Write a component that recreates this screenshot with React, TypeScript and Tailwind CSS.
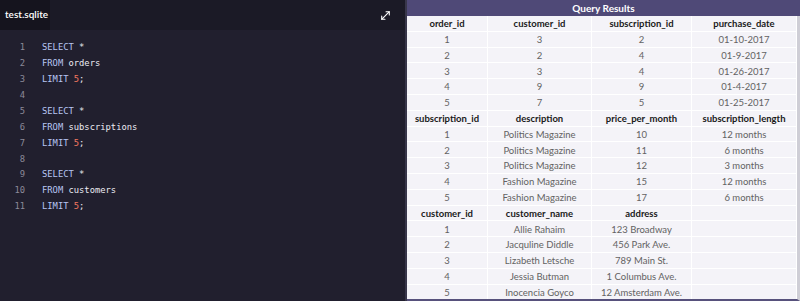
import React from 'react';

type Tok = { t: string; c: 'kw' | 'id' | 'num' | 'pl' };

const lines: Tok[][] = [
  [{ t: 'SELECT', c: 'kw' }, { t: ' *', c: 'pl' }],
  [{ t: 'FROM', c: 'kw' }, { t: ' orders', c: 'id' }],
  [{ t: 'LIMIT', c: 'kw' }, { t: ' ', c: 'pl' }, { t: '5', c: 'num' }, { t: ';', c: 'pl' }],
  [],
  [{ t: 'SELECT', c: 'kw' }, { t: ' *', c: 'pl' }],
  [{ t: 'FROM', c: 'kw' }, { t: ' subscriptions', c: 'id' }],
  [{ t: 'LIMIT', c: 'kw' }, { t: ' ', c: 'pl' }, { t: '5', c: 'num' }, { t: ';', c: 'pl' }],
  [],
  [{ t: 'SELECT', c: 'kw' }, { t: ' *', c: 'pl' }],
  [{ t: 'FROM', c: 'kw' }, { t: ' customers', c: 'id' }],
  [{ t: 'LIMIT', c: 'kw' }, { t: ' ', c: 'pl' }, { t: '5', c: 'num' }, { t: ';', c: 'pl' }],
];

const tokColor = {
  kw: 'text-[#b7c5f2]',
  id: 'text-[#ecebf2]',
  num: 'text-[#f2775f]',
  pl: 'text-[#ecebf2]',
};

const sections: { head: string[]; rows: string[][] }[] = [
  {
    head: ['order_id', 'customer_id', 'subscription_id', 'purchase_date'],
    rows: [
      ['1', '3', '2', '01-10-2017'],
      ['2', '2', '4', '01-9-2017'],
      ['3', '3', '4', '01-26-2017'],
      ['4', '9', '9', '01-4-2017'],
      ['5', '7', '5', '01-25-2017'],
    ],
  },
  {
    head: ['subscription_id', 'description', 'price_per_month', 'subscription_length'],
    rows: [
      ['1', 'Politics Magazine', '10', '12 months'],
      ['2', 'Politics Magazine', '11', '6 months'],
      ['3', 'Politics Magazine', '12', '3 months'],
      ['4', 'Fashion Magazine', '15', '12 months'],
      ['5', 'Fashion Magazine', '17', '6 months'],
    ],
  },
  {
    head: ['customer_id', 'customer_name', 'address', ''],
    rows: [
      ['1', 'Allie Rahaim', '123 Broadway', ''],
      ['2', 'Jacquline Diddle', '456 Park Ave.', ''],
      ['3', 'Lizabeth Letsche', '789 Main St.', ''],
      ['4', 'Jessia Butman', '1 Columbus Ave.', ''],
      ['5', 'Inocencia Goyco', '12 Amsterdam Ave.', ''],
    ],
  },
];

function Row({ cells, head }: { cells: string[]; head?: boolean }) {
  return (
    <div className="grid h-[15.8px] grid-cols-[81px_104px_100px_105px]">
      {cells.map((c, i) => (
        <div
          key={i}
          className={`flex items-center justify-center whitespace-nowrap border-b border-r border-white pt-[1px] leading-none ${
            head ? 'font-bold text-[#1a1a1a]' : 'text-[#626262]'
          }`}
        >
          {c}
        </div>
      ))}
    </div>
  );
}

export default function App() {
  return (
    <div className="flex h-[301px] w-[800px] overflow-hidden bg-[#211f2e]">
      {/* editor */}
      <div className="flex w-[405px] flex-col">
        <div className="flex h-[30px] items-stretch bg-[#1b1a26]">
          <div className="flex w-[50px] items-center bg-[#15141e] pl-[5px] pb-[2px] text-[10px] font-semibold text-white [font-family:Lato,sans-serif]">
            test.sqlite
          </div>
          <div className="flex-1" />
          <div className="flex w-[38px] items-center justify-center pr-[2px]">
            <svg width="13" height="13" viewBox="0 0 24 24" fill="none" stroke="#ffffff" strokeWidth="2" strokeLinecap="round" strokeLinejoin="round">
              <polyline points="13 5 19 5 19 11" />
              <polyline points="11 19 5 19 5 13" />
              <line x1="19" y1="5" x2="5" y2="19" />
            </svg>
          </div>
        </div>
        <div className="pt-[10px] text-[8.8px] [font-family:'DejaVu_Sans_Mono',monospace]">
          {lines.map((l, i) => (
            <div key={i} className="flex h-[15.9px] items-center">
              <div className="w-[25px] text-right text-[#8c8a99]">{i + 1}</div>
              <div className="pl-[17px] whitespace-pre">
                {l.map((tk, j) => (
                  <span key={j} className={tokColor[tk.c]}>
                    {tk.t}
                  </span>
                ))}
              </div>
            </div>
          ))}
        </div>
      </div>

      {/* results */}
      <div className="flex flex-1 flex-col border-l-2 border-[#38364a] bg-[#f4f3f8] text-[9.5px] [font-family:Lato,sans-serif]">
        <div className="flex h-[16px] shrink-0 items-center justify-center bg-[#4f4977] text-[10px] font-bold text-white">
          Query Results
        </div>
        <div className="flex flex-1 overflow-hidden border-b-2 border-r-[3px] border-b-[#57517c] border-r-[#cfced6]">
          <div className="flex-1">
            {sections.map((s, i) => (
              <div key={i}>
                <Row cells={s.head} head />
                {s.rows.map((r, j) => (
                  <Row key={j} cells={r} />
                ))}
              </div>
            ))}
          </div>
        </div>
      </div>
    </div>
  );
}
